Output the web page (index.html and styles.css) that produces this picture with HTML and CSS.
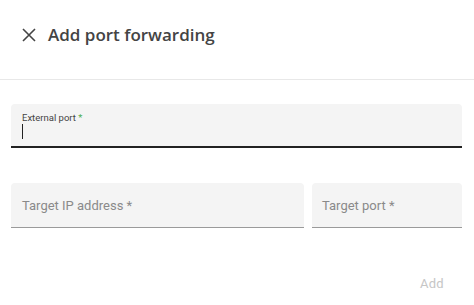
FILE: index.html
```html
<!DOCTYPE html>
<html>
<head>
<meta charset="utf-8">
<link rel="stylesheet" href="styles.css">
</head>
<body>
<div class="dialog">
  <header class="header">
    <svg class="close" width="14" height="14" viewBox="0 0 14 14"><path d="M1 1L13 13M13 1L1 13" stroke="#444" stroke-width="1.6" fill="none"/></svg>
    <h1 class="title">Add port forwarding</h1>
  </header>
  <form class="form">
    <div class="field field-active">
      <div class="label-small">External port <span class="req">*</span></div>
      <div class="cursor"></div>
    </div>
    <div class="row">
      <div class="field field-ip"><span class="placeholder">Target IP address *</span></div>
      <div class="field field-port"><span class="placeholder">Target port *</span></div>
    </div>
    <div class="actions">
      <span class="btn">Add</span>
    </div>
  </form>
</div>
</body>
</html>
```
FILE: styles.css
```css
html, body {
  margin: 0;
  padding: 0;
  background: #fff;
}
.dialog {
  width: 474px;
  height: 305px;
  font-family: Roboto, "Liberation Sans", sans-serif;
}
.header {
  box-sizing: border-box;
  height: 80px;
  border-bottom: 1px solid #e8e8e8;
  display: flex;
  align-items: center;
  padding: 0 0 10px 22px;
}
.close {
  display: block;
  margin-right: 12px;
}
.title {
  margin: 0;
  font-family: "Open Sans", sans-serif;
  font-weight: 600;
  font-size: 17px;
  color: #444;
  letter-spacing: 0;
}
.form {
  padding: 24px 12px 0 11px;
}
.field {
  box-sizing: border-box;
  background: #f4f4f4;
  border-radius: 4px 4px 0 0;
  padding: 0 11px;
}
.field-active {
  height: 44px;
  border-bottom: 2px solid #222;
  padding-top: 8px;
}
.label-small {
  font-size: 9.5px;
  line-height: 12px;
  color: #444;
}
.req {
  color: #4caf50;
}
.cursor {
  width: 1px;
  height: 15px;
  background: #222;
  margin-top: 0;
}
.row {
  display: flex;
  gap: 8px;
  margin-top: 35px;
}
.field-ip, .field-port {
  height: 45px;
  border-bottom: 1px solid #9a9a9a;
  display: flex;
  align-items: center;
}
.field-ip {
  width: 293px;
}
.field-port {
  flex: 1;
  padding-left: 10px;
}
.placeholder {
  font-size: 13px;
  color: #8a8a8a;
}
.actions {
  display: flex;
  justify-content: flex-end;
  margin-top: 48px;
  padding-right: 18px;
}
.btn {
  font-size: 13px;
  color: #c6c6c6;
  letter-spacing: 0.3px;
}
```
